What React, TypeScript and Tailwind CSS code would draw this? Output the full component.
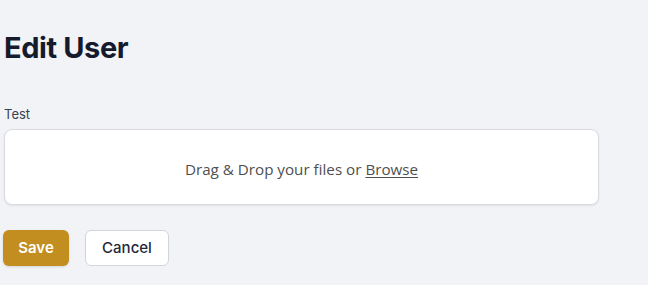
import React from 'react'

const App = () => {
  return (
    <div className="min-h-[285px] w-full bg-[#f2f3f7] pl-[4px] pt-[30px] font-['Inter',sans-serif]">
      <h1 className="text-[29px] font-bold leading-[36px] tracking-[-0.4px] text-[#151b2c]">Edit User</h1>

      <form className="mt-[40px] w-[595px]">
        <label className="block text-[13px] leading-[16px] text-[#374151]">Test</label>
        <div className="mt-[7px] flex h-[76px] items-center justify-center rounded-[8px] border border-[#d9dbe1] bg-white pt-[4px] shadow-[0_1px_2px_rgba(0,0,0,0.08)]">
          <p className="font-['Open_Sans',sans-serif] text-[15.2px] text-[#4f4f4f]">
            Drag &amp; Drop your files or <span className="underline underline-offset-2">Browse</span>
          </p>
        </div>

        <div className="mt-[25px] flex gap-[16px] -ml-[1px]">
          <button type="button" className="h-[36px] w-[66px] rounded-[6px] bg-[#c28e20] text-[15px] font-semibold text-white shadow-sm">
            Save
          </button>
          <button type="button" className="h-[36px] w-[84px] rounded-[6px] border border-[#d1d5db] bg-white text-[15px] font-medium text-[#1e293b]">
            Cancel
          </button>
        </div>
      </form>
    </div>
  )
}

export default App
